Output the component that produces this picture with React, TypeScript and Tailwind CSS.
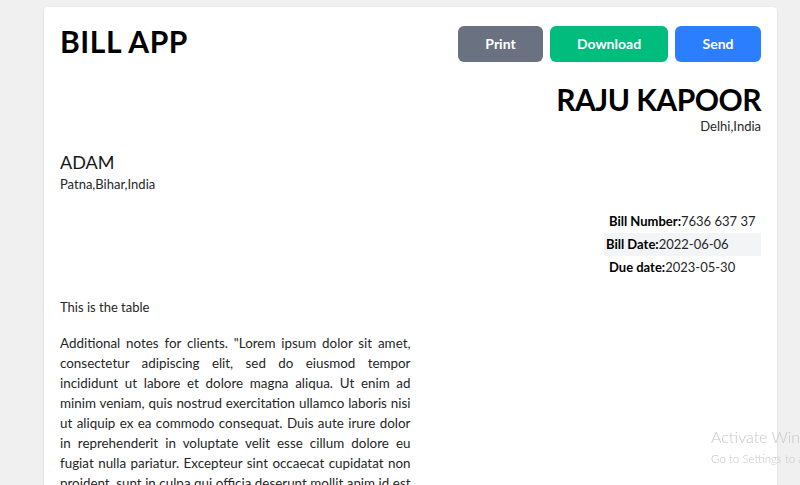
import React from 'react'

const rows = [
  { label: 'Bill Number:', value: '7636 637 37', pad: 'pl-[5px]', bg: '' },
  { label: 'Bill Date:', value: '2022-06-06', pad: 'pl-[2px]', bg: 'bg-gray-100' },
  { label: 'Due date:', value: '2023-05-30', pad: 'pl-[5px]', bg: '' },
]

const notes =
  'Additional notes for clients. "Lorem ipsum dolor sit amet, consectetur adipiscing elit, sed do eiusmod tempor incididunt ut labore et dolore magna aliqua. Ut enim ad minim veniam, quis nostrud exercitation ullamco laboris nisi ut aliquip ex ea commodo consequat. Duis aute irure dolor in reprehenderit in voluptate velit esse cillum dolore eu fugiat nulla pariatur. Excepteur sint occaecat cupidatat non proident, sunt in culpa qui officia deserunt mollit anim id est laborum."'

export default function App() {
  return (
    <div className="min-h-screen bg-[#f0f0f0] pt-[7px] font-['Lato','Noto_Sans',sans-serif] overflow-hidden">
      <div className="ml-[44px] w-[733px] bg-white rounded-sm shadow-sm px-4 pt-[19px] pb-8 text-neutral-900">
        {/* Header */}
        <div className="flex items-start justify-between">
          <h1 className="text-3xl leading-[30px] font-bold tracking-[0.6px] text-black">BILL APP</h1>
          <div className="flex gap-[7px]">
            <button className="h-9 w-[85px] rounded-md bg-gray-500 text-sm font-bold text-white">Print</button>
            <button className="h-9 w-[118px] rounded-md bg-emerald-500 text-sm font-bold text-white">Download</button>
            <button className="h-9 w-[86px] rounded-md bg-blue-500 text-sm font-bold text-white">Send</button>
          </div>
        </div>

        {/* Seller */}
        <div className="mt-5 text-right">
          <h2 className="text-3xl leading-[34px] font-bold tracking-[-0.5px] text-black">RAJU KAPOOR</h2>
          <p className="text-[13px] leading-5 text-neutral-800">Delhi,India</p>
        </div>

        {/* Client */}
        <div className="mt-[14px]">
          <h3 className="text-lg leading-6 text-neutral-900">ADAM</h3>
          <p className="text-[13px] leading-5 text-neutral-800">Patna,Bihar,India</p>
        </div>

        {/* Bill details */}
        <div className="mt-4 ml-auto w-[157px] text-[13px] whitespace-nowrap">
          {rows.map(r => (
            <div key={r.label} className={`h-[23px] flex items-center ${r.pad} ${r.bg}`}>
              <span className="font-bold text-black">{r.label}</span>
              <span className="text-neutral-800">{r.value}</span>
            </div>
          ))}
        </div>

        <p className="mt-[18px] text-[13px] leading-5 text-neutral-800">This is the table</p>

        <p className="mt-4 w-1/2 text-justify text-[13.4px] leading-5 text-neutral-800">{notes}</p>
      </div>

      {/* Windows watermark */}
      <div className="fixed left-[711px] top-[425px] text-[#c8c8c8] font-light pointer-events-none whitespace-nowrap">
        <p className="text-[16px] leading-6">Activate Windows</p>
        <p className="text-[11.5px] leading-5">Go to Settings to activate Windows.</p>
      </div>
    </div>
  )
}
